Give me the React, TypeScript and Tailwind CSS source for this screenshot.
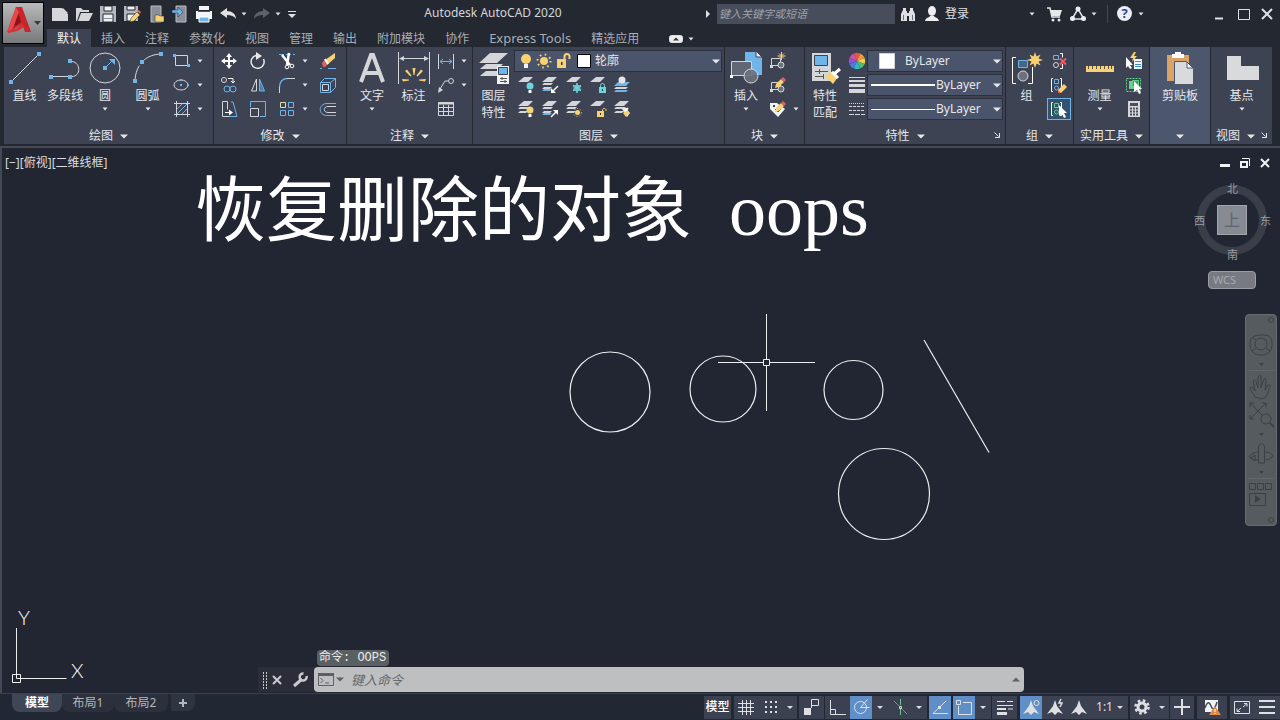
import type { ReactNode } from 'react'

interface IconProps {
  w?: number
  h?: number
  className?: string
  children: ReactNode
}

function Icon({ w = 18, h = 18, className = '', children }: IconProps) {
  return (
    <svg
      width={w}
      height={h}
      viewBox={`0 0 ${w} ${h}`}
      fill="none"
      stroke="currentColor"
      aria-hidden="true"
      className={`shrink-0 ${className}`}
    >
      {children}
    </svg>
  )
}

const BLUE = '#6fb5ea'
const YELLOW = '#f8d173'
const GREY = '#d4d6d9'
const TEAL = '#6fd3dc'

function Caret({ className = '' }: { className?: string }) {
  return (
    <Icon w={8} h={5} className={className}>
      <path d="M0 0.5h8L4 4.5z" fill="currentColor" stroke="none" />
    </Icon>
  )
}

function SmallCaret() {
  return (
    <Icon w={6} h={4}>
      <path d="M0.5 0.5h5L3 3.5z" fill="currentColor" stroke="none" />
    </Icon>
  )
}

/* ---------- ribbon building blocks ---------- */

interface BigToolProps {
  icon: ReactNode
  label: string
  second?: string
  caret?: boolean
  className?: string
}

function BigTool({ icon, label, second, caret, className = 'w-10' }: BigToolProps) {
  return (
    <button className={`flex flex-col items-center shrink-0 whitespace-nowrap ${className}`}>
      <span className="h-9 mt-[3px] mb-px flex items-center justify-center">{icon}</span>
      <span className="leading-[18px]">{label}</span>
      {second && <span className="leading-4">{second}</span>}
      {caret && <span className="h-2 flex items-center"><SmallCaret /></span>}
    </button>
  )
}

interface SmallItem {
  name: string
  icon: ReactNode
  caret?: boolean
  active?: boolean
}

function SmallColumn({ items, carets }: { items: SmallItem[]; carets?: boolean }) {
  return (
    <div className="flex flex-col pt-[2px]">
      {items.map(item => (
        <div key={item.name} className="flex items-center h-6">
          <button
            aria-label={item.name}
            className={`w-6 h-[22px] flex items-center justify-center ${
              item.active ? 'bg-[#33526e] border border-[#6fb5ea]' : ''
            }`}
          >
            {item.icon}
          </button>
          {carets && (
            <span className="w-3 flex justify-center">{item.caret && <SmallCaret />}</span>
          )}
        </div>
      ))}
    </div>
  )
}

interface PanelProps {
  title: string
  className: string
  launcher?: boolean
  highlight?: boolean
  bodyClass?: string
  children: ReactNode
}

function Panel({ title, className, launcher, highlight, bodyClass = '', children }: PanelProps) {
  return (
    <section
      className={`relative shrink-0 h-[97px] flex flex-col ${
        highlight ? 'bg-[#4c566c]' : 'bg-[#3d4353]'
      } ${className}`}
    >
      <div className={`flex-1 flex ${bodyClass}`}>{children}</div>
      <button className="h-[18px] pt-0.5 flex items-center justify-center gap-[7px]">
        {title}
        <Caret />
      </button>
      {launcher && (
        <Icon w={6} h={6} className="absolute right-[5px] bottom-1.5">
          <path d="M0.5 0.5l4 4M5.5 1v4.5H1" />
        </Icon>
      )}
    </section>
  )
}

/* ---------- icons ---------- */

const lineIcon = (
  <Icon w={34} h={34}>
    <path d="M4 30L30 4" stroke={GREY} />
    <path d="M1 29h4v4h-4zM29 1h4v4h-4z" fill={BLUE} stroke="none" />
  </Icon>
)
const polylineIcon = (
  <Icon w={34} h={34}>
    <path d="M3 25.500h17M24 25.500c9 0 9-14 0-15" stroke={GREY} />
    <path d="M1 24h4v4h-4zM20 24h4v4h-4zM20 8h4v4h-4z" fill={BLUE} stroke="none" />
  </Icon>
)
const circleIcon = (
  <Icon w={34} h={34}>
    <circle cx="17" cy="17" r="15" stroke={GREY} />
    <path d="M18 16l7-7" stroke={BLUE} />
    <path d="M15 15h4v4h-4zM21 8h6v6z" fill={BLUE} stroke="none" />
  </Icon>
)
const arcIcon = (
  <Icon w={34} h={34}>
    <path d="M4 29C5 14 14 4 29 3" stroke={GREY} strokeDasharray="15 3 30" />
    <path d="M2 28h4v4h-4zM28 1h4v4h-4zM9 9h4v4h-4z" fill={BLUE} stroke="none" />
  </Icon>
)
const rectIcon = (
  <Icon>
    <path d="M2.500 3.500h12v10h-12z" stroke={GREY} />
    <path d="M0 2h3v3h-3zM14 12h3v3h-3z" fill={BLUE} stroke="none" />
  </Icon>
)
const ellipseIcon = (
  <Icon>
    <ellipse cx="8" cy="9" rx="7" ry="5" stroke={GREY} />
    <path d="M7 8h2v2h-2zM7 3h2v2h-2zM14 8h2v2h-2z" fill={BLUE} stroke="none" />
  </Icon>
)
const hatchIcon = (
  <Icon>
    <path d="M3.500 1v16M14.500 1v16M1 3.500h16M1 14.500h16" stroke={GREY} />
    <path d="M4 9l5-5M4 14l10-10M9 14l5-5" stroke={BLUE} />
  </Icon>
)
const moveIcon = (
  <Icon>
    <path d="M9 3v12M3 9h12" stroke="#fff" strokeWidth="2" />
    <path d="M9 1l3 4H6zM9 17l3-4H6zM1 9l4-3v6zM17 9l-4-3v6z" fill="#fff" stroke="none" />
  </Icon>
)
const rotateIcon = (
  <Icon>
    <path d="M7 3.500A6.500 6.500 0 1 0 14.500 7" stroke="#e8e9eb" strokeWidth="1.500" />
    <path d="M7 0l6 4-6 4z" fill="#e8e9eb" stroke="none" />
  </Icon>
)
const trimIcon = (
  <Icon>
    <path d="M1 2.500h16" stroke={BLUE} strokeDasharray="5 2" />
    <path d="M4 3l8 10M11 1l-2 12" stroke="#fff" strokeWidth="2.500" />
    <circle cx="9" cy="15" r="1.800" stroke="#fff" />
    <circle cx="14" cy="14" r="1.800" stroke="#fff" />
  </Icon>
)
const copyIcon = (
  <Icon>
    <circle cx="4" cy="4" r="2.500" stroke={GREY} />
    <path d="M8 2.500h5v4M11 5l2 2 2-2" stroke="#fff" />
    <circle cx="7" cy="13" r="3" stroke={BLUE} />
    <circle cx="13" cy="13" r="3" stroke={BLUE} />
  </Icon>
)
const mirrorIcon = (
  <Icon>
    <path d="M7.500 3v12h-5z" stroke={GREY} />
    <path d="M10.500 3v12h5z" stroke={BLUE} fill="#4c7fa8" />
  </Icon>
)
const filletIcon = (
  <Icon>
    <path d="M1.500 17v-6M9 2.500h8" stroke={GREY} />
    <path d="M1.500 11c0-5 3-8.500 7.500-8.500" stroke={BLUE} strokeWidth="1.500" />
  </Icon>
)
const stretchIcon = (
  <Icon>
    <path d="M9 16.500H2.500v-15h5v8" stroke={GREY} />
    <path d="M11 2h2l4 14.500H9" stroke={BLUE} />
    <path d="M5 12h4V9.500l4 3-4 3V13H5z" fill="#fff" stroke="none" />
  </Icon>
)
const scaleIcon = (
  <Icon>
    <path d="M1.500 7V1.500h15v15H11" stroke={BLUE} />
    <path d="M1.500 8.500h8v8h-8z" stroke={GREY} />
  </Icon>
)
const arrayIcon = (
  <Icon>
    <path d="M2.500 2.500h5v5h-5z" stroke="#d9e0ac" />
    <path d="M10.500 2.500h5v5h-5zM2.500 10.500h5v5h-5zM10.500 10.500h5v5h-5z" stroke={BLUE} />
  </Icon>
)
const eraseIcon = (
  <Icon>
    <path d="M6 8l10-7v5L8 13z" fill={YELLOW} stroke="none" />
    <path d="M3 11l3-4 3 5-3 3H4z" fill="#e2605e" stroke="none" />
    <path d="M6 7l3 5" stroke="#fff" strokeWidth="2" />
    <path d="M1 16.500h2M9 16.500h8" stroke={BLUE} />
  </Icon>
)
const explodeIcon = (
  <Icon>
    <path d="M1.500 6.500h10v10h-10zM5.500 2.500h11v9M1.500 6.500l4-4M11.500 6.500l5-4M11.500 16.500l5-5" stroke={BLUE} />
    <path d="M3.500 8.500h6v6h-6z" stroke={GREY} />
  </Icon>
)
const offsetIcon = (
  <Icon>
    <path d="M17 3.500H8c-9 0-9 12 0 12h9" stroke={BLUE} />
    <path d="M17 6.500H9c-5 0-5 6 0 6h8" stroke={GREY} />
  </Icon>
)
const textIcon = (
  <Icon w={28} h={32}>
    <path d="M3 30L13 3h2l10 27M6.500 21h15" stroke={GREY} strokeWidth="4" />
  </Icon>
)
const dimensionIcon = (
  <Icon w={32} h={34}>
    <path d="M0.500 1v32M31.500 1v32M4 7.500h24" stroke={GREY} />
    <path d="M1 7.500l5-2.500v5zM31 7.500l-5-2.500v5z" fill={GREY} stroke="none" />
    <path d="M14.500 17h3l-1 7h-1zM7 20l2-1.500 4.500 6-1 1zM25 20l-2-1.500-4.500 6 1 1zM4 28l1 2.500 6-1v-1zM28 28l-1 2.500-6-1v-1z" fill={YELLOW} stroke="none" />
  </Icon>
)
const linearDimIcon = (
  <Icon>
    <path d="M1.500 2v15M16.500 2v15" stroke={GREY} />
    <path d="M3 9.500h12M6 7L3 9.500 6 12M12 7l3 2.500-3 2.500" stroke={BLUE} />
  </Icon>
)
const leaderIcon = (
  <Icon>
    <circle cx="14" cy="5" r="2.500" stroke={GREY} />
    <path d="M11.500 5H8l-5 8" stroke={GREY} />
    <path d="M1 17l1-6 4 3z" fill={GREY} stroke="none" />
  </Icon>
)
const tableIcon = (
  <Icon>
    <path d="M1.500 2.500h15v13h-15zM1.500 7.500h15M1.500 11.500h15M6.500 5v10M11.500 5v10" stroke={GREY} />
    <path d="M1.500 3.500h15" stroke={GREY} strokeWidth="2" />
  </Icon>
)
const layerPropsIcon = (
  <Icon w={34} h={34}>
    <path d="M13 2h18L20 12H2zM4 17l5-4h17l-5 5H3zM4 24l5-4h12v5H3z" fill={GREY} stroke="none" />
    <path d="M20 15h12v18H20z" fill="#f1f2f3" stroke="none" />
    <path d="M21.500 16.500h9v7h-9z" stroke="#3d4353" fill={BLUE} />
    <path d="M23 27.500h7M23 30.500h7M25 26v3M28 29v3" stroke="#555" />
  </Icon>
)

// Sheets used as the base of the small layer tools
function LayerSheets({ full, children }: { full?: boolean; children: ReactNode }) {
  return (
    <Icon>
      <path d="M7 1h9l-5 5H1z" fill={GREY} stroke="none" />
      {full && <path d="M3 7h9l-2 2H1zM3 11h8l-2 2H1z" fill={GREY} stroke="none" />}
      {children}
    </Icon>
  )
}

const bulb = (color: string) => (
  <>
    <circle cx="13" cy="10" r="3.500" fill={color} stroke="none" />
    <path d="M11.500 14h3v3h-3z" fill="#fff" stroke="none" />
  </>
)

const layerOffIcon = <LayerSheets>{bulb(TEAL)}</LayerSheets>
const layerOnIcon = <LayerSheets full>{bulb(YELLOW)}</LayerSheets>
const layerIsoIcon = (
  <LayerSheets full>
    <path d="M3 13h8l-2 2H1z" fill={BLUE} stroke="none" />
    <path d="M17 10l-5 5" stroke="#fff" strokeWidth="1.500" />
    <path d="M10 17v-5l5 5z" fill="#fff" stroke="none" />
  </LayerSheets>
)
const layerUnisoIcon = (
  <LayerSheets full>
    <path d="M3 13h8l-2 2H1z" fill={BLUE} stroke="none" />
    <path d="M10 17l5-5" stroke="#fff" strokeWidth="1.500" />
    <path d="M17 10v5l-5-5z" fill="#fff" stroke="none" />
  </LayerSheets>
)
const layerFreezeIcon = (
  <LayerSheets>
    <path d="M12 7v10M8 9.500l8 5M8 14.500l8-5" stroke={TEAL} strokeWidth="1.500" />
    <circle cx="12" cy="12" r="3" stroke={TEAL} />
  </LayerSheets>
)
const layerThawIcon = (
  <LayerSheets full>
    <circle cx="12.500" cy="12.500" r="2.500" fill={YELLOW} stroke="none" />
    <circle cx="12.500" cy="12.500" r="4" stroke={YELLOW} strokeDasharray="1 2" />
  </LayerSheets>
)
const layerLockIcon = (
  <LayerSheets>
    <path d="M10 11h7v6h-7z" fill={TEAL} stroke="none" />
    <path d="M11.500 11V9.500a2 2 0 0 1 4 0V11" stroke={TEAL} />
    <path d="M13 13h1v2h-1z" fill="#333" stroke="none" />
  </LayerSheets>
)
const layerUnlockIcon = (
  <LayerSheets>
    <path d="M8 11h7v6H8z" fill={YELLOW} stroke="none" />
    <path d="M13.500 11V9.500a2 2 0 0 1 3.500 0V11" stroke={YELLOW} />
    <path d="M11 13h1v2h-1z" fill="#333" stroke="none" />
  </LayerSheets>
)
const layerCurrentIcon = (
  <Icon>
    <path d="M5 6h12l-4 4H1z" fill={BLUE} stroke="none" />
    <path d="M3 11h12l-2 2H1z" fill={GREY} stroke="none" />
    <path d="M3 14h12l-2 2H1z" fill={BLUE} stroke="none" />
    <circle cx="9" cy="4" r="3.500" fill="#e4e5e7" stroke="none" />
  </Icon>
)
const layerMatchIcon = (
  <LayerSheets full>
    <path d="M9 9l3-2 5 6-3 4z" fill="#f4ead0" stroke="none" />
    <path d="M10 13l4-3 2 3-3 4z" fill={YELLOW} stroke="none" />
    <path d="M12 11l3-3" stroke="#fff" strokeWidth="2" />
  </LayerSheets>
)

const insertIcon = (
  <Icon w={34} h={34}>
    <path d="M16 1h12l5 5v18H16z" fill={BLUE} stroke="none" />
    <path d="M27 0v6h6z" fill="#dff0fb" stroke="#3d4353" />
    <path d="M2.500 10.500h20v14h-20z" fill="#626775" stroke={GREY} />
    <circle cx="22" cy="25" r="7" fill="#6c717d" fillOpacity="0.9" stroke={GREY} />
    <path d="M1 24h3v3H1z" fill="#fff" stroke="none" />
  </Icon>
)

function BlockBase({ children }: { children: ReactNode }) {
  return (
    <Icon>
      <path d="M2.500 6.500h9v7h-9z" stroke={GREY} />
      <circle cx="12" cy="13" r="3" stroke={GREY} fill="#6c717d" />
      <path d="M1 13h3v3H1z" fill={GREY} stroke="none" />
      {children}
    </Icon>
  )
}

const pencil = (
  <>
    <path d="M7 8l5-5 3 3-5 5-4 1z" fill={YELLOW} stroke="none" />
    <path d="M12 3l2-2 3 3-2 2z" fill="#e2605e" stroke="none" />
  </>
)
const blockCreateIcon = (
  <BlockBase>
    <path d="M12.500 0v8M8.500 4h8M10 1.500l5 5M15 1.500l-5 5" stroke={YELLOW} />
  </BlockBase>
)
const blockEditIcon = <BlockBase>{pencil}</BlockBase>
const blockAttrIcon = (
  <Icon>
    <path d="M1 3h7l8 6-7 8-8-8z" fill="#f1f2f3" stroke="none" />
    <path d="M4 5h2v2H4z" fill="#3d4353" stroke="none" />
    <path d="M6 9l3 3 3-3" stroke="#3d4353" />
    {pencil}
  </Icon>
)

const matchPropsIcon = (
  <Icon w={34} h={34}>
    <path d="M4 2h19v28H4z" fill={GREY} stroke="none" />
    <path d="M6.500 4.500h13v10h-13z" fill={BLUE} stroke="#3d4353" />
    <path d="M7 20.500h13M7 25.500h9M11.500 18v5M15.500 23v5" stroke="#555" />
    <path d="M17 25l8-5 5 6-5 7z" fill={YELLOW} stroke="none" />
    <path d="M24 21l6 6M26 23l6-5" stroke="#fff" strokeWidth="3" />
  </Icon>
)
const colorWheelIcon = (
  <Icon>
    {['#e7553f', '#f39a3d', '#f3d04a', '#4fbf6b', '#36b5c8', '#4a7de0', '#8c55dc', '#d94fa0'].map((c, i) => (
      <path key={c} d="M9 9L5.900 1.400A8.200 8.200 0 0 1 12.100 1.400z" fill={c} stroke="none" transform={`rotate(${i * 45} 9 9)`} />
    ))}
  </Icon>
)
const lineweightListIcon = (
  <Icon>
    <path d="M1 1.500h16" strokeWidth="1" stroke={GREY} />
    <path d="M1 5h16" strokeWidth="2" stroke={GREY} />
    <path d="M1 9.500h16" strokeWidth="3" stroke={GREY} />
    <path d="M1 15h16" strokeWidth="4" stroke={GREY} />
  </Icon>
)
const linetypeListIcon = (
  <Icon>
    <path d="M1 3.500h16" strokeDasharray="1 1" stroke={GREY} />
    <path d="M1 6.500h16M1 10.500h16" strokeDasharray="3 1" stroke={GREY} />
    <path d="M1 14.500h16" strokeDasharray="5 1" stroke={GREY} />
  </Icon>
)

const star = (cx: number, cy: number) => (
  <path
    transform={`translate(${cx} ${cy})`}
    d="M0-8l1.500 4.500L5.500-5.500 3.500-1.500 8 0 3.500 1.500 5.500 5.500 1.500 3.500 0 8-1.500 3.500-5.500 5.500-3.500 1.500-8 0-3.500-1.500-5.500-5.500-1.500-3.500z"
    fill={YELLOW}
    stroke="none"
  />
)

const groupIcon = (
  <Icon w={34} h={34}>
    <path d="M6 6.500H2.500v26H6M18 32.500h4.500V16" stroke="#fff" />
    <path d="M8.500 9.500h9v7h-9z" stroke={BLUE} fill="#44678a" />
    <circle cx="13" cy="25" r="5" stroke={GREY} fill="#6c717d" />
    {star(25, 9)}
  </Icon>
)

function GroupBase({ color = BLUE, children }: { color?: string; children: ReactNode }) {
  return (
    <Icon>
      <path d="M3 2.500H1.500v13H3M10 2.500h1.500v13H10" stroke="#fff" />
      <path d="M4.500 3.500h4v4h-4z" stroke={color} />
      <circle cx="6.500" cy="12" r="2" stroke={color} />
      {children}
    </Icon>
  )
}

const cursorPath = <path d="M9 5v11l3-2 2 4 2-1-2-4h3z" fill="#fff" stroke="none" />
const ungroupIcon = (
  <Icon>
    <path d="M10 1.500h2.500v4M12.500 12v4.500H10" stroke="#fff" />
    <path d="M3.500 3.500h5v4h-5z" stroke={BLUE} />
    <circle cx="6" cy="13" r="2.500" stroke={GREY} />
    <path d="M10 6.500l6 6M16 6.500l-6 6" stroke="#ee5a5f" strokeWidth="2" />
  </Icon>
)
const groupEditIcon = (
  <GroupBase>
    <path d="M8 14l6-6 3 3-6 6H8z" fill={YELLOW} stroke="none" />
    <path d="M8 14l3 3H8z" fill="#e2605e" stroke="none" />
  </GroupBase>
)
const groupSelectIcon = <GroupBase color="#65d18b">{cursorPath}</GroupBase>

const measureIcon = (
  <Icon w={30} h={34}>
    <path d="M1 15h28v6H1z" fill={YELLOW} stroke="none" />
    <path d="M3.500 15v3M7.500 15v3M11.500 15v3M15.500 15v3M19.500 15v3M23.500 15v3M26.500 15v3" stroke="#5b5340" />
  </Icon>
)
const quickSelectIcon = (
  <Icon>
    <path d="M9 7h8v10H9z" fill="#f1f5fb" stroke="none" />
    <path d="M10 9.500h6M10 12.500h6M10 14.500h6" stroke="#3f8bd0" />
    <path d="M9 0L5 6h3l-1 4 5-6H9l2-4z" fill={YELLOW} stroke="none" />
    <path d="M1 5v11l2-2 2 3 2-1-2-3h3z" fill="#fff" stroke="none" />
  </Icon>
)
const selectAllIcon = (
  <Icon>
    <path d="M1.500 2.500h14v13h-14z" stroke="#65d18b" strokeDasharray="2 1" />
    <path d="M4 5h4v5h6v3H4z" fill="#65d18b" stroke="none" />
    <path d="M7.500 4.500h6v6h-6z" fill="#3e9a5f" stroke="#65d18b" />
    {cursorPath}
  </Icon>
)
const calculatorIcon = (
  <Icon>
    <path d="M3 1h12v16H3z" fill={GREY} stroke="none" />
    <path d="M5 4.500h8" stroke="#4a4f5b" strokeWidth="3" />
    <path d="M5 8.500h8M5 11.500h8M5 14.500h8" stroke="#4a4f5b" strokeWidth="2" strokeDasharray="2 1" />
  </Icon>
)
const clipboardIcon = (
  <Icon w={30} h={34}>
    <path d="M2 4h22v26H2z" fill="#d9a468" stroke="none" />
    <path d="M7 3h3V1h6v2h3v4H7z" fill="#fff" stroke="none" />
    <path d="M9.500 10.500h12l7 7v16h-19z" fill="#d9dadc" stroke="#4c566c" />
    <path d="M22 11v6h6z" fill="#fff" stroke="#4c566c" />
  </Icon>
)
const baseIcon = (
  <Icon w={34} h={34}>
    <path d="M2 5h14v10h18v14H2z" fill="#d9dadc" stroke="none" />
  </Icon>
)

const drawSmall: SmallItem[] = [
  { name: '矩形', icon: rectIcon, caret: true },
  { name: '椭圆', icon: ellipseIcon, caret: true },
  { name: '图案填充', icon: hatchIcon, caret: true }
]
const modifyFirst: SmallItem[] = [
  { name: '移动', icon: moveIcon },
  { name: '复制', icon: copyIcon },
  { name: '拉伸', icon: stretchIcon }
]
const modifySecond: SmallItem[] = [
  { name: '旋转', icon: rotateIcon },
  { name: '镜像', icon: mirrorIcon },
  { name: '缩放', icon: scaleIcon }
]
const modifyThird: SmallItem[] = [
  { name: '修剪', icon: trimIcon, caret: true },
  { name: '圆角', icon: filletIcon, caret: true },
  { name: '阵列', icon: arrayIcon, caret: true }
]
const modifyFourth: SmallItem[] = [
  { name: '删除', icon: eraseIcon },
  { name: '分解', icon: explodeIcon },
  { name: '偏移', icon: offsetIcon }
]
const annotateSmall: SmallItem[] = [
  { name: '线性', icon: linearDimIcon, caret: true },
  { name: '引线', icon: leaderIcon, caret: true },
  { name: '表格', icon: tableIcon }
]
const layerTools: SmallItem[] = [
  { name: '关闭', icon: layerOffIcon },
  { name: '隔离', icon: layerIsoIcon },
  { name: '冻结', icon: layerFreezeIcon },
  { name: '锁定', icon: layerLockIcon },
  { name: '置为当前', icon: layerCurrentIcon },
  { name: '打开所有图层', icon: layerOnIcon },
  { name: '取消隔离', icon: layerUnisoIcon },
  { name: '解冻所有图层', icon: layerThawIcon },
  { name: '解锁', icon: layerUnlockIcon },
  { name: '匹配图层', icon: layerMatchIcon }
]
const blockSmall: SmallItem[] = [
  { name: '创建', icon: blockCreateIcon },
  { name: '编辑', icon: blockEditIcon },
  { name: '编辑属性', icon: blockAttrIcon, caret: true }
]
const propertySmall: SmallItem[] = [
  { name: '颜色', icon: colorWheelIcon },
  { name: '线宽', icon: lineweightListIcon },
  { name: '线型', icon: linetypeListIcon }
]
const groupSmall: SmallItem[] = [
  { name: '解除编组', icon: ungroupIcon },
  { name: '组编辑', icon: groupEditIcon },
  { name: '启用组选择', icon: groupSelectIcon, active: true }
]
const utilitySmall: SmallItem[] = [
  { name: '快速选择', icon: quickSelectIcon },
  { name: '全部选择', icon: selectAllIcon },
  { name: '快速计算器', icon: calculatorIcon }
]

interface PickerProps {
  name: string
  value: string
  padding: string
  children: ReactNode
}

function Picker({ name, value, padding, children }: PickerProps) {
  return (
    <div className="relative h-[22px] bg-[#4a546b] border border-[#2b303c]">
      <span className="absolute inset-y-0 left-0 flex items-center pointer-events-none">{children}</span>
      <select aria-label={name} className={`appearance-none w-full h-5 outline-none ${padding}`}>
        <option>{value}</option>
      </select>
      <Caret className="absolute right-[1px] top-2 pointer-events-none" />
    </div>
  )
}

function Ribbon() {
  return (
    <div className="flex gap-px pl-1 text-[#e6e7ea]">
      <Panel title="绘图" className="w-[209px]">
        <BigTool icon={lineIcon} label="直线" className="w-[41px]" />
        <BigTool icon={polylineIcon} label="多段线" />
        <BigTool icon={circleIcon} label="圆" caret />
        <BigTool icon={arcIcon} label="圆弧" caret className="w-[45px]" />
        <SmallColumn items={drawSmall} carets />
      </Panel>
      <Panel title="修改" className="w-[132px]" bodyClass="pl-[3px] gap-[5px]">
        <SmallColumn items={modifyFirst} />
        <SmallColumn items={modifySecond} />
        <SmallColumn items={modifyThird} carets />
        <SmallColumn items={modifyFourth} />
      </Panel>
      <Panel title="注释" className="w-[125px]" bodyClass="pl-1">
        <BigTool icon={textIcon} label="文字" caret className="w-[42px]" />
        <BigTool icon={dimensionIcon} label="标注" className="w-[41px]" />
        <SmallColumn items={annotateSmall} carets />
      </Panel>
      <Panel title="图层" className="w-[251px]" bodyClass="pr-0.5">
        <BigTool icon={layerPropsIcon} label="图层" second="特性" className="w-[41px]" />
        <div className="flex-1 flex flex-col pt-[3px]">
          <Picker name="图层" value="轮廓" padding="pl-[80px]">
            <Icon w={78} h={18}>
              <circle cx="11" cy="7" r="5" fill={YELLOW} stroke="none" />
              <path d="M9 12h4v4H9z" fill="#f1f2f3" stroke="none" />
              <circle cx="29" cy="9" r="4" fill={YELLOW} stroke="none" />
              <circle cx="29" cy="9" r="6.500" stroke={YELLOW} strokeWidth="2" strokeDasharray="1.600 3.500" />
              <path d="M42 7h9v9h-9z" fill={YELLOW} stroke="none" />
              <path d="M49.500 8V4.500a2.500 2.500 0 0 1 5 0V7" stroke={YELLOW} strokeWidth="2" />
              <path d="M46 10h1.500v3H46z" fill="#333" stroke="none" />
              <path d="M62.500 2.500h13v13h-13z" fill="#fff" stroke="#000" />
            </Icon>
          </Picker>
          <div className="grid grid-cols-[repeat(5,24px)] pt-px">
            {layerTools.map(tool => (
              <button key={tool.name} aria-label={tool.name} className="h-6 flex items-center justify-center">
                {tool.icon}
              </button>
            ))}
          </div>
        </div>
      </Panel>
      <Panel title="块" className="w-[79px]" bodyClass="pl-px">
        <BigTool icon={insertIcon} label="插入" caret />
        <SmallColumn items={blockSmall} carets />
      </Panel>
      <Panel title="特性" className="w-[200px]" launcher bodyClass="pr-0.5">
        <BigTool icon={matchPropsIcon} label="特性" second="匹配" />
        <SmallColumn items={propertySmall} />
        <div className="flex-1 flex flex-col gap-0.5 pt-[3px] -ml-0.5">
          <Picker name="颜色" value="ByLayer" padding="pl-[37px]">
            <Icon w={30} h={18}>
              <path d="M11.500 1.500h15v15h-15z" fill="#fff" stroke="#d0d3da" />
            </Icon>
          </Picker>
          <Picker name="线宽" value="ByLayer" padding="pl-[68px]">
            <Icon w={68} h={18}><path d="M3 9h64" stroke="#fff" strokeWidth="2" /></Icon>
          </Picker>
          <Picker name="线型" value="ByLayer" padding="pl-[68px]">
            <Icon w={68} h={18}><path d="M3 9.500h64" stroke="#fff" /></Icon>
          </Picker>
        </div>
      </Panel>
      <Panel title="组" className="w-[67px]">
        <BigTool icon={groupIcon} label="组" className="w-[41px]" />
        <SmallColumn items={groupSmall} />
      </Panel>
      <Panel title="实用工具" className="w-[75px]" bodyClass="pl-[3px]">
        <BigTool icon={measureIcon} label="测量" caret className="w-[45px]" />
        <SmallColumn items={utilitySmall} />
      </Panel>
      <Panel title="" className="w-[60px]" highlight>
        <BigTool icon={clipboardIcon} label="剪贴板" className="flex-1" />
      </Panel>
      <Panel title="视图" className="w-[61px] pr-3" launcher>
        <BigTool icon={baseIcon} label="基点" caret className="flex-1 pl-3" />
      </Panel>
    </div>
  )
}

/* ---------- header ---------- */

const quickAccess = [
  {
    name: '新建',
    icon: <path d="M1 3h10l6 6v7H1zM12 3l5 5h-5z" fill={GREY} stroke="none" />
  },
  {
    name: '打开',
    icon: <path d="M1 16V3h5l2 2h6v2H5L2 16zM6 8h12l-4 8H3z" fill={GREY} stroke="none" />
  },
  {
    name: '保存',
    icon: (
      <>
        <path d="M1 1h16v16H1z" fill="#b4b7bc" stroke="none" />
        <path d="M5 1h8v5H5zM4 9h10v8H4z" fill="#eff0f2" stroke="#232831" />
        <path d="M5 13.500h8" stroke="#8b8f96" />
      </>
    )
  },
  {
    name: '另存为',
    icon: (
      <>
        <path d="M1 1h14v15H1z" fill="#b4b7bc" stroke="none" />
        <path d="M4 1h8v4H4zM4 9h8v7H4z" fill="#eff0f2" stroke="#232831" />
        <path d="M8 13l6-6 3 3-6 6-4 1z" fill={YELLOW} stroke="#232831" strokeWidth="0.5" />
        <path d="M14 6l3 3 1-2-2-2z" fill="#e2605e" stroke="none" />
      </>
    )
  },
  {
    name: '从 Web 打开',
    icon: (
      <>
        <path d="M4 1h10v16H4z" fill="#8b8e94" stroke="#b9bcc1" />
        <path d="M8 10h4l1 1h4v6H8z" fill={YELLOW} stroke="#232831" strokeWidth="0.5" />
      </>
    )
  },
  {
    name: '保存到 Web',
    icon: (
      <>
        <path d="M5 1h10v16H5z" fill="#8b8e94" stroke="#b9bcc1" />
        <path d="M1 5h6V2l5 5-5 5V8H1z" fill={BLUE} stroke="#232831" strokeWidth="0.500" />
      </>
    )
  },
  {
    name: '打印',
    icon: (
      <>
        <path d="M4 1h10v4H4zM1 6h16v8H1z" fill="#f4f5f6" stroke="none" />
        <path d="M4 12h10v5H4z" fill={BLUE} stroke="#fff" />
        <path d="M3 6.500h12" stroke="#555" />
      </>
    )
  },
  {
    name: '放弃',
    icon: <path d="M1 8l7-5v3c5 0 9 3 9 8-2-3-5-4-9-4v3z" fill="#dfe0e3" stroke="none" />,
    caret: true
  },
  {
    name: '重做',
    icon: <path d="M17 8l-7-5v3c-5 0-9 3-9 8 2-3 5-4 9-4v3z" fill="#5c616b" stroke="none" />,
    caret: true
  }
]

const ribbonTabs = ['默认', '插入', '注释', '参数化', '视图', '管理', '输出', '附加模块', '协作', 'Express Tools', '精选应用']

function Header() {
  return (
    <header className="flex h-[47px]">
      <button
        aria-label="应用程序菜单"
        className="w-[42px] h-[42px] ml-0.5 mt-px shrink-0 border border-black bg-linear-to-b from-[#b9babb] to-[#77797b] flex items-center justify-center"
      >
        <Icon w={38} h={38}>
          <path d="M12 3h6l9 25h-6l-3-8-8 5-2 3H3z" fill="#c9252c" stroke="none" />
          <path d="M14 8l-4 15 7-5z" fill="#8e1319" stroke="none" />
          <path d="M12 3L3 28l5-2 7-18z" fill="#e8474b" stroke="none" />
          <path d="M4 27c7-1 11-4 14-8l2 4c-4 3-8 5-16 6z" fill="#d93035" stroke="none" />
          <path d="M30 17h7l-3.500 4z" fill="#3a3a3a" stroke="none" />
        </Icon>
      </button>
      <div className="flex-1 flex flex-col">
        <div className="h-7 flex items-center pl-[7px] pr-1 text-[#dfe0e3]">
          <div className="flex items-center gap-1.5 -mt-[3px]">
            {quickAccess.map(item => (
              <button key={item.name} aria-label={item.name} className="flex items-center gap-1">
                <Icon>{item.icon}</Icon>
                {item.caret && <SmallCaret />}
              </button>
            ))}
            <button aria-label="自定义快速访问工具栏">
              <Icon w={10} h={10}>
                <path d="M1 2.500h8" stroke="#dfe0e3" />
                <path d="M1 5h8L5 9z" fill="#dfe0e3" stroke="none" />
              </Icon>
            </button>
          </div>
          <h1 className="flex-1 text-center pr-4 -mt-[4px] text-[#d3d5d9]">Autodesk AutoCAD 2020</h1>
          <div className="flex items-center -mt-[3px]">
            <Icon w={6} h={8} className="mr-1.5"><path d="M1 0v8l4-4z" fill="currentColor" stroke="none" /></Icon>
            <input
              aria-label="搜索"
              placeholder="键入关键字或短语"
              className="w-[178px] h-5 px-0.5 bg-[#474d5a] text-[11px] italic outline-none placeholder:text-[#9ea2aa]"
            />
            <button aria-label="查找" className="ml-1">
              <Icon>
                <path d="M4 3h3v3h1v10H2V9l2-4zM11 3h3v2l2 4v7h-6V6h1zM8 8h2v3H8z" fill="currentColor" stroke="none" />
                <path d="M4.500 10v5M13.500 10v5" stroke="#6a6f7a" />
              </Icon>
            </button>
            <button className="flex items-center gap-1 ml-1.5">
              <Icon>
                <ellipse cx="9" cy="6" rx="4" ry="5" fill="#eceef1" stroke="none" />
                <path d="M2 16c1-4 4-3 5-5h4c1 2 4 1 5 5z" fill="#eceef1" stroke="none" />
              </Icon>
              登录
            </button>
            <span className="ml-[60px]"><SmallCaret /></span>
            <button aria-label="App Store" className="ml-2.5">
              <Icon>
                <path d="M2 3h3l2 9h8" stroke="#e5e7ea" strokeWidth="1.500" />
                <path d="M5 5h12l-2 6H7z" fill="#e5e7ea" stroke="none" />
                <circle cx="8" cy="15" r="1.500" fill="#e5e7ea" stroke="none" />
                <circle cx="14" cy="15" r="1.500" fill="#e5e7ea" stroke="none" />
              </Icon>
            </button>
            <button aria-label="保持连接" className="flex items-center gap-1 ml-1.5">
              <Icon>
                <path d="M9 4L3 14h12z" stroke="#dfe1f2" strokeWidth="1.500" />
                <circle cx="9" cy="4" r="2.500" fill="#eceef6" stroke="none" />
                <circle cx="3.500" cy="13.500" r="2.500" fill="#eceef6" stroke="none" />
                <circle cx="14.500" cy="13.500" r="2.500" fill="#eceef6" stroke="none" />
              </Icon>
              <SmallCaret />
            </button>
            <span className="w-px h-[18px] ml-2.5 bg-[#444a55]" />
            <button aria-label="帮助" className="flex items-center gap-1.5 ml-[9px]">
              <span className="w-[15px] h-[15px] rounded-full bg-[#eceef4] text-[#28459c] text-[13px] leading-[15px] font-bold text-center">?</span>
              <SmallCaret />
            </button>
            <button aria-label="最小化" className="ml-[66px]"><Icon><path d="M5 13.500h8" stroke="#dfe0e3" strokeWidth="2" /></Icon></button>
            <button aria-label="最大化" className="ml-1.5"><Icon><path d="M4.500 4.500h11v10h-11z" stroke="#dfe0e3" /></Icon></button>
            <button aria-label="关闭" className="ml-1.5"><Icon><path d="M4 4l10 10M14 4L4 14" stroke="#dfe0e3" strokeWidth="2" /></Icon></button>
          </div>
        </div>
        <nav className="h-[19px] flex items-center pl-[3px]">
          {ribbonTabs.map((tab, i) => (
            <button
              key={tab}
              className={`h-[19px] px-2.5 leading-[19px] ${i === 0 ? 'bg-[#3d4353] text-[#f1f2f4]' : 'text-[#a9adb5]'} ${
                tab === 'Express Tools' ? 'text-[13px]' : ''
              }`}
            >
              {tab}
            </button>
          ))}
          <button aria-label="最小化面板" className="flex items-center gap-1 ml-5 text-[#dfe0e3]">
            <Icon w={15} h={8}>
              <rect x="0.500" y="0.500" width="13" height="7" rx="2" fill="#eceef1" />
              <path d="M4 5.500h6L7 2.500z" fill="#333" stroke="none" />
            </Icon>
            <SmallCaret />
          </button>
        </nav>
      </div>
    </header>
  )
}

/* ---------- drawing area ---------- */

function Drawing() {
  return (
    <>
      <svg className="absolute left-0 top-0 w-full h-full" fill="none" stroke="#eceef0" aria-hidden="true">
        <g strokeWidth="1.200">
          <circle cx="608" cy="244" r="40" />
          <circle cx="721" cy="241" r="33" />
          <circle cx="851.500" cy="242" r="29.500" />
          <circle cx="882" cy="346" r="45.500" />
          <path d="M922 192l65 112.500" />
        </g>
        <path d="M764.500 166v45M764.500 218v45M716 214.500h45M768 214.500h45M761.500 211.500h6v6h-6z" />
        {/* UCS axes */}
        <path d="M14.500 480v50.500h50M10.500 526.500h8v8h-8z" />
      </svg>
      <span className="absolute left-4 top-[459px] text-[20px] leading-5 font-light font-[Lato,sans-serif] text-white">Y</span>
      <span className="absolute left-[69px] top-[512px] text-[20px] leading-5 font-light font-[Lato,sans-serif] text-white">X</span>
      <p className="absolute left-[193px] top-[8px] flex items-baseline whitespace-nowrap text-white">
        <span className="text-[71px] leading-[104px]">恢复删除的对象</span>
        <span className="ml-[37px] text-[74px] leading-[104px] font-['Liberation_Serif',serif]">oops</span>
      </p>
    </>
  )
}

function ViewCube() {
  return (
    <div className="absolute right-[9px] top-[33px] w-[78px] flex flex-col items-center text-[11px] text-[#9a9da4]">
      <div className="relative w-[78px] h-[78px]">
        <div className="absolute inset-1 rounded-full border-[8px] border-[#3a3e49]" />
        <button className="absolute left-6 top-6 w-[30px] h-[30px] border border-[#a2a5aa] bg-[#868a92] text-[#5f636e] text-[16px] leading-[26px]">上</button>
        <span className="absolute left-[34px] top-0 leading-4">北</span>
        <span className="absolute left-[34px] -bottom-1 leading-4">南</span>
        <span className="absolute left-px top-8 leading-4">西</span>
        <span className="absolute right-0 top-8 leading-4">东</span>
      </div>
      <button className="mt-3 w-12 h-[18px] rounded border border-[#9a9da4] bg-[#777a83] pl-1 text-left leading-4 text-[#a7aab0]">WCS</button>
    </div>
  )
}

function NavBar() {
  return (
    <div className="absolute right-[3px] top-[166px] w-8 h-[212px] rounded bg-[#565b60] border border-[#666b70] text-[#3c4046]">
      <Icon w={30} h={210}>
        <circle cx="25" cy="5" r="2.500" />
        <path d="M15 20c8 0 11 1 11 9 0 7-4 11-11 11s-11-4-11-11 5-9 11-9z" />
        <circle cx="15" cy="29" r="6" />
        <path d="M6 22l4 3M24 36l-4-3M6 36l4-3" />
        <path d="M13 48h5l-2.500 3zM13 118h5l-2.500 3zM13 156h5l-2.500 3z" fill="currentColor" stroke="none" />
        <path d="M2 55.500h26M2 163.500h26" stroke="#62676c" />
        <path d="M9 82c-2-4-4-6-5-9 2-2 4 0 5 3l-2-10c1-2 3-1 3 1l2 6V62c1-2 3-2 3 0v11l3-9c1-1 3 0 2 2l-1 9 3-5c2-1 3 1 2 2-2 4-3 11-8 12z" />
        <path d="M4 88l16 16M20 88L4 104M4 92v-4h4M16 88h4v4M4 100v4h4" />
        <circle cx="20" cy="104" r="5" fill="#565b60" />
        <path d="M24 108l4 4" strokeWidth="2" />
        <path d="M12.500 148v-17l3-3 3 3v17zM12 137c-11 2-11 8 0 8M19 137c10 1 10 6 1 8M5 143l4-3v6z" />
        <path d="M3.500 168.500h6v6h-6zM11.500 168.500h6v6h-6zM19.500 168.500h6v6h-6zM3.500 178.500h16v12h-16z" />
        <path d="M9 180v8l6-4z" fill="currentColor" stroke="none" />
        <circle cx="25" cy="205" r="2.500" />
      </Icon>
    </div>
  )
}

function CommandLine() {
  return (
    <div className="absolute inset-x-64 bottom-px">
      <div className="ml-[59px] w-[72px] h-4 px-0.5 mb-px rounded-sm bg-[#5a5f61] text-[12px] leading-4 whitespace-pre text-[#eceded] font-['Liberation_Mono','Noto_Sans_CJK_SC',monospace]">命令: OOPS</div>
      <div className="flex h-[25px]">
        <div className="w-14 bg-[#2b2e39] flex items-center gap-1 pl-1 text-[#c9cbcf]">
          <Icon w={6} h={18}>
            <path d="M1.500 1v17M4.500 1v17" strokeDasharray="2 1" />
          </Icon>
          <button aria-label="关闭"><Icon w={12} h={12}><path d="M1 2l8 8M9 2l-8 8" strokeWidth="2" /></Icon></button>
          <button aria-label="自定义" className="ml-1">
            <Icon w={16} h={16}>
              <path d="M2 14l8-7" strokeWidth="3" />
              <path d="M14.500 4a3.500 3.500 0 1 1-3-2.500" strokeWidth="2.500" />
            </Icon>
          </button>
        </div>
        <label className="flex-1 flex items-center rounded-sm bg-[#bdbfc1] text-[#5d5f62] px-1">
          <Icon w={16} h={13}>
            <path d="M0.500 1h15v11.500H0.500z" />
            <path d="M0 1.500h16" strokeWidth="3" />
            <path d="M2.500 5l2.500 2.500L2.500 10M7 10h4" />
          </Icon>
          <span className="ml-0.5"><Caret /></span>
          <input
            aria-label="命令"
            placeholder="键入命令"
            className="flex-1 min-w-0 ml-[7px] bg-transparent text-[13px] leading-4 italic outline-none placeholder:text-[#66686c]"
          />
          <Icon w={8} h={5}><path d="M0 4.500h8l-4-4z" fill="currentColor" stroke="none" /></Icon>
        </label>
      </div>
    </div>
  )
}

function Canvas() {
  return (
    <main className="relative flex-1 min-h-0 overflow-hidden bg-[#222632] border-t-2 border-l-2 border-[#444955]">
      <Drawing />
      <div className="absolute left-[3px] top-1.5 flex leading-[18px] text-[#dcdde0]">
        <button>[−]</button>
        <button>[俯视]</button>
        <button>[二维线框]</button>
      </div>
      <div className="absolute right-[9px] top-[9px] flex gap-2 text-[#f1f2f3]">
        <button aria-label="最小化视口"><Icon w={12} h={12}><path d="M1 8.500h10" strokeWidth="3" /></Icon></button>
        <button aria-label="还原视口"><Icon w={12} h={12}><path d="M2 5h6v5H2z" strokeWidth="2" /><path d="M3 1.500h7.500V9" /></Icon></button>
        <button aria-label="关闭视口"><Icon w={12} h={12}><path d="M2 2l8 8M10 2l-8 8" strokeWidth="2" /></Icon></button>
      </div>
      <ViewCube />
      <NavBar />
      <CommandLine />
    </main>
  )
}

/* ---------- status bar ---------- */

interface StatusButtonProps {
  name: string
  className: string
  active?: boolean
  children: ReactNode
}

function StatusButton({ name, className, active, children }: StatusButtonProps) {
  return (
    <button
      aria-label={name}
      className={`h-[23px] flex items-center justify-center ${active ? 'bg-[#5f8fc6]' : 'bg-[#3b4151]'} ${className}`}
    >
      {children}
    </button>
  )
}

const scaleGlyph = <path d="M9 2l2 6 6 8-5-2-3 3-3-3-5 2 6-8z" fill="currentColor" stroke="none" />

const layoutTabs = [
  { name: '模型', width: 'w-[50px]', active: true },
  { name: '布局1', width: 'w-[52px]' },
  { name: '布局2', width: 'w-[54px]' }
]

function StatusBar() {
  return (
    <footer className="h-[27px] flex justify-between bg-[#222833] border-t border-[#3b404c] text-[#dfe0e3]">
      <div className="flex pl-3">
        {layoutTabs.map(tab => (
          <button
            key={tab.name}
            className={`h-[18px] leading-[18px] rounded-b-lg ${tab.width} ${
              tab.active ? 'bg-[#3f4656] text-white font-bold' : 'bg-[#2b303c] text-[#b4b7be]'
            }`}
          >
            {tab.name}
          </button>
        ))}
        <button aria-label="新建布局" className="w-6 h-[17px] ml-[3px] rounded-br-lg bg-[#2f3441] flex items-center justify-center text-[#b4b7be]">
          <Icon w={10} h={10}><path d="M5 1v8M1 5h8" strokeWidth="2" /></Icon>
        </button>
      </div>
      <div className="flex items-center">
        <StatusButton name="模型空间" className="w-[27px] mr-[3px] font-medium text-white">模型</StatusButton>
        <StatusButton name="栅格" className="w-6">
          <Icon><path d="M5.500 2v15M9.500 2v15M13.500 2v15M1 5.500h16M1 9.500h16M1 13.500h16" /></Icon>
        </StatusButton>
        <StatusButton name="捕捉模式" className="w-[25px]">
          <Icon><path d="M3 4h12M3 9h12M3 14h12" strokeWidth="2" strokeDasharray="2 3" /></Icon>
        </StatusButton>
        <StatusButton name="捕捉设置" className="w-3.5 mr-0.5"><Caret className="w-1.5" /></StatusButton>
        <StatusButton name="动态输入" className="w-[25px] mr-px">
          <Icon>
            <path d="M1 10h7v7H1z" fill="currentColor" stroke="none" />
            <path d="M8.500 10V1.500h7v6h-7" />
          </Icon>
        </StatusButton>
        <StatusButton name="正交" className="w-[25px]">
          <Icon><path d="M1.500 2v14.500H17M1.500 11.500h5v5" /></Icon>
        </StatusButton>
        <StatusButton name="极轴追踪" className="w-[22px]" active>
          <Icon><circle cx="8.500" cy="9.500" r="6" /><path d="M8.500 9.500h9M8.500 9.500l7-8" /></Icon>
        </StatusButton>
        <StatusButton name="极轴设置" className="w-4"><Caret className="w-1.5" /></StatusButton>
        <StatusButton name="等轴测草图" className="w-[23px]">
          <Icon>
            <path d="M3 3l5 5M11 11l5 5" stroke="#d4697a" />
            <path d="M9.500 1v6M9.500 11v6" stroke="#6fc598" />
            <path d="M8.500 8.500h2v2h-2z" />
          </Icon>
        </StatusButton>
        <StatusButton name="等轴测设置" className="w-4 mr-0.5"><Caret className="w-1.5" /></StatusButton>
        <StatusButton name="对象捕捉追踪" className="w-[22px] mr-0.5" active>
          <Icon><path d="M17 15.500H2L15 3" /><path d="M7 8h3v3H7z" fill="currentColor" stroke="none" /></Icon>
        </StatusButton>
        <StatusButton name="对象捕捉" className="w-[22px]" active>
          <Icon><path d="M8 4.500h8.500v12h-13V8" /><path d="M1.500 2.500h4v4h-4z" /></Icon>
        </StatusButton>
        <StatusButton name="对象捕捉设置" className="w-4 mr-px"><Caret className="w-1.5" /></StatusButton>
        <StatusButton name="线宽" className="w-[25px] mr-[3px]">
          <Icon>
            <path d="M1 3.500h8M11 3.500h6M1 7.500h16" />
            <path d="M1 11h9" strokeWidth="2" /><path d="M12 11h5" />
            <path d="M1 15.500h10" strokeWidth="3" />
          </Icon>
        </StatusButton>
        <StatusButton name="注释可见性" className="w-[22px]" active>
          <Icon><g>{scaleGlyph}</g><circle cx="14.500" cy="5" r="2.500" /></Icon>
        </StatusButton>
        <StatusButton name="自动缩放" className="w-[25px]">
          <Icon>{scaleGlyph}<path d="M15 1l-2 4h3l-2 4" strokeWidth="1.500" /></Icon>
        </StatusButton>
        <StatusButton name="注释比例" className="w-6"><Icon>{scaleGlyph}</Icon></StatusButton>
        <StatusButton name="比例列表" className="w-[37px] mr-0.5 gap-1">1:1<Caret className="w-1.5" /></StatusButton>
        <StatusButton name="切换工作空间" className="w-6">
          <Icon>
            <circle cx="9" cy="9" r="4" strokeWidth="3" />
            <circle cx="9" cy="9" r="6.500" strokeWidth="2.500" strokeDasharray="2.600 2.500" />
          </Icon>
        </StatusButton>
        <StatusButton name="工作空间列表" className="w-[15px] mr-px"><Caret className="w-1.5" /></StatusButton>
        <StatusButton name="注释监视器" className="w-6 mr-[3px]">
          <Icon><path d="M9 1v16M1 9h16" strokeWidth="2" /></Icon>
        </StatusButton>
        <StatusButton name="图形性能" className="w-[30px] mr-[3px]">
          <Icon>
            <path d="M2 2h13v12H2z" fill="#f1f2f3" stroke="none" />
            <path d="M2 10c2-6 4-7 6-2s4 3 6-4" stroke="#444a58" strokeWidth="1.500" />
            <path d="M12 8l6 9H6z" fill="#e08a47" stroke="none" />
            <path d="M12 11v3M12 15v1" stroke="#fff" />
          </Icon>
        </StatusButton>
        <StatusButton name="全屏显示" className="w-6">
          <Icon>
            <path d="M1.500 3.500h15v12h-15z" />
            <path d="M10 9l4-3.500M11 5.500h3v3M8 10l-4 3.500M4 10.500v3h3" />
          </Icon>
        </StatusButton>
        <StatusButton name="自定义" className="w-[26px]">
          <Icon><path d="M1 3h16M1 9h16M1 15h16" strokeWidth="2" /></Icon>
        </StatusButton>
      </div>
    </footer>
  )
}

export default function App() {
  return (
    <div className="h-screen min-w-[1280px] flex flex-col overflow-hidden bg-[#232831] pt-px text-[12px] font-['Noto_Sans','Noto_Sans_CJK_SC',sans-serif]">
      <Header />
      <div className="pb-[2px] -mt-px">
        <Ribbon />
      </div>
      <Canvas />
      <StatusBar />
    </div>
  )
}
